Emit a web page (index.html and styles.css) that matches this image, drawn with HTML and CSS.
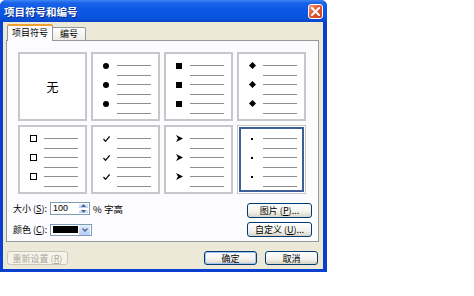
FILE: index.html
```html
<!DOCTYPE html>
<html lang="zh-CN">
<head>
    <meta charset="UTF-8">
    <title>项目符号和编号</title>
    <link rel="stylesheet" href="styles.css">
</head>
<body>
    <div class="window">
        <div class="titlebar">
            <span class="title">项目符号和编号</span>
            <span class="close-btn">
                <svg width="9" height="9" viewBox="0 0 9 9"><path d="M1 1 L8 8 M8 1 L1 8" stroke="#fff" stroke-width="2" stroke-linecap="square"/></svg>
            </span>
        </div>
        <div class="client">
            <div class="tabs">
                <div class="tab active">项目符号</div>
                <div class="tab">编号</div>
            </div>
            <div class="panel">
                <div class="bullet-grid">
                    <div class="cell none">无</div>
                    <div class="cell">
                        <div class="item"><span class="mark"><span class="dot"></span></span><span class="lines"><i></i><i></i></span></div>
                        <div class="item"><span class="mark"><span class="dot"></span></span><span class="lines"><i></i><i></i></span></div>
                        <div class="item"><span class="mark"><span class="dot"></span></span><span class="lines"><i></i><i></i></span></div>
                    </div>
                    <div class="cell">
                        <div class="item"><span class="mark"><span class="square"></span></span><span class="lines"><i></i><i></i></span></div>
                        <div class="item"><span class="mark"><span class="square"></span></span><span class="lines"><i></i><i></i></span></div>
                        <div class="item"><span class="mark"><span class="square"></span></span><span class="lines"><i></i><i></i></span></div>
                    </div>
                    <div class="cell">
                        <div class="item"><span class="mark"><span class="diamond"></span></span><span class="lines"><i></i><i></i></span></div>
                        <div class="item"><span class="mark"><span class="diamond"></span></span><span class="lines"><i></i><i></i></span></div>
                        <div class="item"><span class="mark"><span class="diamond"></span></span><span class="lines"><i></i><i></i></span></div>
                    </div>
                    <div class="cell">
                        <div class="item"><span class="mark"><span class="box"></span></span><span class="lines"><i></i><i></i></span></div>
                        <div class="item"><span class="mark"><span class="box"></span></span><span class="lines"><i></i><i></i></span></div>
                        <div class="item"><span class="mark"><span class="box"></span></span><span class="lines"><i></i><i></i></span></div>
                    </div>
                    <div class="cell">
                        <div class="item"><span class="mark"><svg width="7" height="6" viewBox="0 0 7 6"><path d="M0.5 3 L2.5 5.3 L6.6 0.5" fill="none" stroke="#000" stroke-width="1.2"/></svg></span><span class="lines"><i></i><i></i></span></div>
                        <div class="item"><span class="mark"><svg width="7" height="6" viewBox="0 0 7 6"><path d="M0.5 3 L2.5 5.3 L6.6 0.5" fill="none" stroke="#000" stroke-width="1.2"/></svg></span><span class="lines"><i></i><i></i></span></div>
                        <div class="item"><span class="mark"><svg width="7" height="6" viewBox="0 0 7 6"><path d="M0.5 3 L2.5 5.3 L6.6 0.5" fill="none" stroke="#000" stroke-width="1.2"/></svg></span><span class="lines"><i></i><i></i></span></div>
                    </div>
                    <div class="cell">
                        <div class="item"><span class="mark"><svg width="7" height="7" viewBox="0 0 7 7"><path d="M0 0 L7 3.5 L0 7 L2 3.5 Z" fill="#000"/></svg></span><span class="lines"><i></i><i></i></span></div>
                        <div class="item"><span class="mark"><svg width="7" height="7" viewBox="0 0 7 7"><path d="M0 0 L7 3.5 L0 7 L2 3.5 Z" fill="#000"/></svg></span><span class="lines"><i></i><i></i></span></div>
                        <div class="item"><span class="mark"><svg width="7" height="7" viewBox="0 0 7 7"><path d="M0 0 L7 3.5 L0 7 L2 3.5 Z" fill="#000"/></svg></span><span class="lines"><i></i><i></i></span></div>
                    </div>
                    <div class="cell selected">
                        <div class="item"><span class="mark"><span class="small-dot"></span></span><span class="lines"><i></i><i></i></span></div>
                        <div class="item"><span class="mark"><span class="small-dot"></span></span><span class="lines"><i></i><i></i></span></div>
                        <div class="item"><span class="mark"><span class="small-dot"></span></span><span class="lines"><i></i><i></i></span></div>
                    </div>
                </div>

                <div class="options">
                    <div class="fields">
                        <div class="field-row">
                            <label class="field-label">大小 (<u>S</u>):</label>
                            <span class="spin">
                                <span class="spin-value">100</span>
                                <span class="spin-btns">
                                    <b><svg width="5" height="3" viewBox="0 0 5 3"><path d="M0 3 L2.5 0 L5 3 Z" fill="#4d6185"/></svg></b>
                                    <b><svg width="5" height="3" viewBox="0 0 5 3"><path d="M0 0 L2.5 3 L5 0 Z" fill="#4d6185"/></svg></b>
                                </span>
                            </span>
                            <span class="unit">% 字高</span>
                        </div>
                        <div class="field-row">
                            <label class="field-label">颜色 (<u>C</u>):</label>
                            <span class="color-pick">
                                <span class="swatch"></span>
                                <span class="drop-btn"><svg width="6" height="4" viewBox="0 0 6 4"><path d="M0.5 0.5 L3 3 L5.5 0.5" fill="none" stroke="#4d6185" stroke-width="1.4"/></svg></span>
                            </span>
                        </div>
                    </div>
                    <div class="side-buttons">
                        <button class="btn">图片 (<u>P</u>)...</button>
                        <button class="btn">自定义 (<u>U</u>)...</button>
                    </div>
                </div>
            </div>

            <div class="footer">
                <button class="btn disabled reset">重新设置 (<u>R</u>)</button>
                <span class="spacer"></span>
                <button class="btn default">确定</button>
                <button class="btn">取消</button>
            </div>
        </div>
    </div>
</body>
</html>
```

FILE: styles.css
```css
body {
    margin: 0;
    background-color: #ffffff;
    font-family: "Noto Sans CJK SC", "Liberation Sans", sans-serif;
    font-size: 10px;
    color: #000;
}

.window {
    width: 327px;
    height: 272px;
    background-color: #0a3fd0;
    display: flex;
    flex-direction: column;
    border-radius: 6px 6px 0 0;
    overflow: hidden;
}

.titlebar {
    height: 22px;
    flex: none;
    display: flex;
    align-items: center;
    justify-content: space-between;
    padding: 0 4px 0 4px;
    background: linear-gradient(#3d86f5 0, #1a63e8 3px, #0c58e4 10px, #0a55df 17px, #0846c8 22px);
}

.title {
    color: #fff;
    font-weight: bold;
    font-size: 10.5px;
    text-shadow: 1px 1px 0 #0a2a8a;
}

.close-btn {
    width: 15px;
    height: 15px;
    box-sizing: border-box;
    border: 1px solid #fff;
    border-radius: 3px;
    background: linear-gradient(135deg, #f09a7c 0, #e2593a 45%, #c8421f 100%);
    display: flex;
    align-items: center;
    justify-content: center;
}

.client {
    flex: 1;
    margin: 0 4px 3px 3px;
    padding: 2px 4px 0 3px;
    background-color: #ece9d8;
    display: flex;
    flex-direction: column;
}

.tabs {
    display: flex;
    align-items: flex-end;
    height: 16px;
    margin-left: 1px;
}

.tab {
    height: 13px;
    width: 33px;
    text-align: center;
    line-height: 12px;
    box-sizing: border-box;
    border: 1px solid #919b9c;
    border-bottom: 0;
    border-left: 0;
    border-radius: 0 2px 0 0;
    background: linear-gradient(#ffffff, #ecebe5);
    font-size: 9px;
}

.tab.active {
    width: 46px;
    height: 17px;
    line-height: 14px;
    margin-bottom: -1px;
    border-left: 1px solid #919b9c;
    border-top: 2px solid #f0a030;
    border-radius: 2px 2px 0 0;
    background: #fcfcfe;
    position: relative;
    z-index: 1;
}

.panel {
    height: 202px;
    box-sizing: border-box;
    border: 1px solid #919b9c;
    background-color: #fcfcfe;
    padding: 11px 6px 0 6px;
}

.bullet-grid {
    display: grid;
    grid-template-columns: repeat(4, 69px);
    grid-template-rows: 69px 69px;
    gap: 4px;
    margin-left: 5px;
}

.cell {
    box-sizing: border-box;
    border: 2px solid #c4c8cd;
    background-color: #fff;
    padding: 7px 0 0 8px;
    display: flex;
    flex-direction: column;
}

.cell.none {
    padding: 0;
    align-items: center;
    justify-content: center;
    font-size: 12px;
}

.cell.selected {
    border: 1px solid #c4c8cd;
    box-shadow: inset 0 0 0 1px #fff, inset 0 0 0 3px #3f5f9a;
    padding: 8px 0 0 9px;
}

.item {
    height: 19px;
    display: flex;
    align-items: flex-start;
}

.mark {
    width: 10px;
    height: 9px;
    margin-right: 6px;
    display: flex;
    align-items: center;
    justify-content: center;
}

.lines {
    width: 34px;
    padding-top: 4px;
    display: flex;
    flex-direction: column;
    gap: 9px;
}

.lines i {
    display: block;
    height: 1px;
    background-color: #8e8e8e;
}

.dot {
    width: 6px;
    height: 6px;
    border-radius: 50%;
    background-color: #000;
}

.square {
    width: 6px;
    height: 6px;
    background-color: #000;
}

.diamond {
    width: 5px;
    height: 5px;
    background-color: #000;
    transform: rotate(45deg);
}

.box {
    width: 7px;
    height: 7px;
    box-sizing: border-box;
    border: 1.5px solid #000;
}

.small-dot {
    width: 2px;
    height: 2px;
    background-color: #000;
}

.options {
    display: flex;
    justify-content: space-between;
    margin-top: 8px;
}

.fields {
    display: flex;
    flex-direction: column;
    gap: 8px;
}

.field-row {
    display: flex;
    align-items: center;
    height: 13px;
}

.field-label {
    width: 37px;
    font-size: 9px;
    white-space: nowrap;
}

.spin {
    width: 40px;
    height: 13px;
    box-sizing: border-box;
    border: 1px solid #7f9db9;
    background-color: #fff;
    display: flex;
    align-items: stretch;
}

.spin-value {
    flex: 1;
    padding-left: 2px;
    font-family: "Liberation Sans", sans-serif;
    font-size: 9px;
    line-height: 11px;
}

.spin-btns {
    width: 11px;
    display: flex;
    flex-direction: column;
}

.spin-btns b {
    flex: 1;
    display: flex;
    align-items: center;
    justify-content: center;
    background: linear-gradient(#e3ecfd, #b9cdf6);
    border: 1px solid #fff;
    border-radius: 1px;
}

.unit {
    margin-left: 3px;
    font-size: 9.5px;
}

.color-pick {
    width: 42px;
    height: 12px;
    box-sizing: border-box;
    border: 1px solid #7f9db9;
    background-color: #fff;
    display: flex;
    align-items: center;
    padding: 0 1px 0 2px;
    gap: 1px;
}

.swatch {
    flex: 1;
    height: 7px;
    background-color: #000;
}

.drop-btn {
    width: 11px;
    height: 10px;
    display: flex;
    align-items: center;
    justify-content: center;
    background: linear-gradient(#e3ecfd, #b5ccf7);
    border-radius: 1px;
}

.side-buttons {
    display: flex;
    flex-direction: column;
    gap: 4px;
    margin-top: 1px;
}

.btn {
    height: 15px;
    width: 65px;
    padding: 0;
    box-sizing: border-box;
    border: 1px solid #003c74;
    border-radius: 3px;
    background: linear-gradient(#ffffff, #f3f2ec 60%, #d8d4c4);
    font-family: "Noto Sans CJK SC", sans-serif;
    font-size: 9px;
    line-height: 12px;
    color: #000;
    white-space: nowrap;
}

.footer {
    display: flex;
    align-items: center;
    gap: 8px;
    margin-top: 9px;
    padding: 0 1px;
}

.footer .btn {
    width: 53px;
    height: 14px;
    line-height: 11px;
}

.footer .reset {
    width: 61px;
}

.btn.disabled {
    border-color: #c9c7ba;
    background: #f5f4ea;
    color: #aca899;
}

.btn.default {
    box-shadow: inset 0 0 0 1px #a6c2f5;
}

.spacer {
    flex: 1;
}
```
